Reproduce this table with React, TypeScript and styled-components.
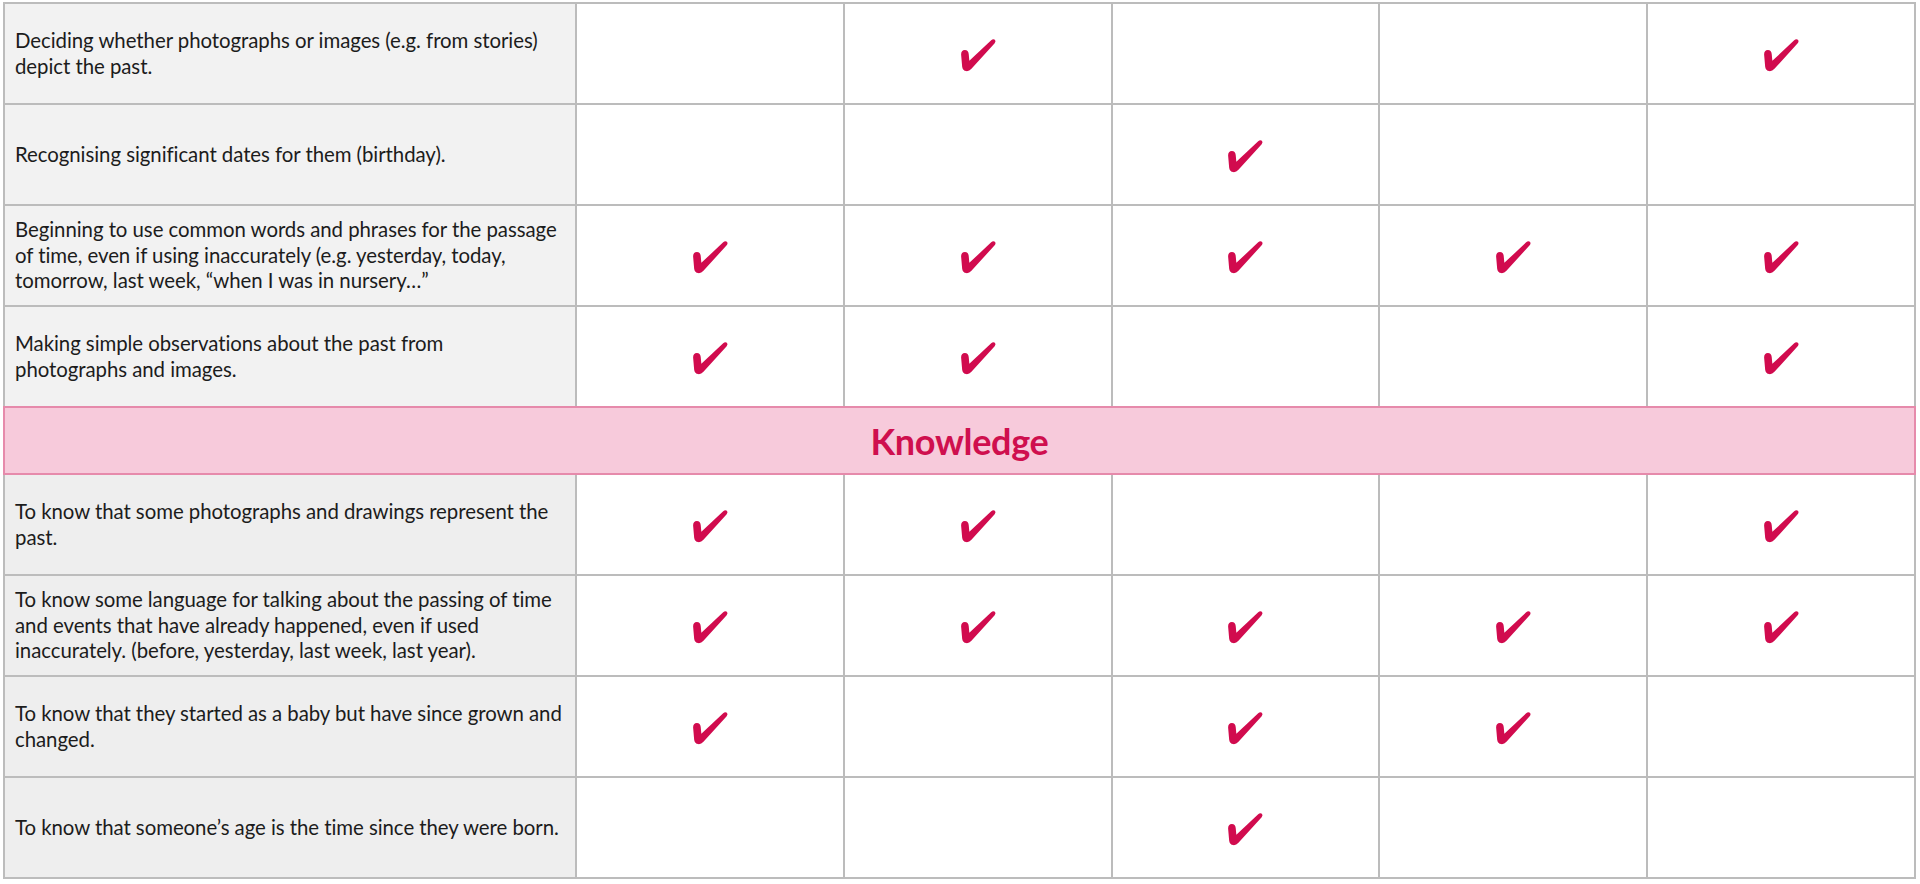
import styled, { createGlobalStyle } from 'styled-components';

const GlobalStyle = createGlobalStyle`
    body {
        margin: 0;
        background: #ffffff;
        font-family: Lato, 'Open Sans', sans-serif;
    }
`;

const Page = styled.div`
    padding: 2px 6px 3px 3px;
`;

const Grid = styled.div`
    display: grid;
    width: 1911px;
    grid-template-columns: 572px repeat(5, 1fr);
    grid-auto-rows: 101px;
    border-top: 2px solid #bcbcbc;
    border-left: 2px solid #bcbcbc;
`;

const LabelCell = styled.div<{ $tone: string }>`
    display: flex;
    align-items: center;
    padding: 0 6px 0 10px;
    background: ${(p) => p.$tone};
    border-right: 2px solid #bcbcbc;
    border-bottom: 2px solid #bcbcbc;
    color: #1c1c1c;
    font-size: 20.4px;
    letter-spacing: -0.05px;
    line-height: 25.5px;
    white-space: pre-line;
`;

const CheckCell = styled.div`
    display: flex;
    align-items: center;
    justify-content: center;
    background: #ffffff;
    border-right: 2px solid #bcbcbc;
    border-bottom: 2px solid #bcbcbc;
`;

const SectionCell = styled.div`
    grid-column: 1 / -1;
    margin: -2px 0 0 -2px;
    display: flex;
    align-items: center;
    justify-content: center;
    background: #f7cadb;
    border: 2px solid #e68aab;
    color: #cf0f4e;
    font-size: 36px;
    font-weight: 700;
    letter-spacing: -0.3px;
`;

const Tick = () => (
    <svg width="38" height="36" viewBox="0 0 36 34">
        <path
            d="M2 17.5 Q2 13.2 5.6 13.2 Q8.8 13.2 9.2 17 L9.8 23.5 L30.5 4 Q32.5 2.3 34 3.6 Q35.3 5 33.8 6.8 L11.8 31 Q9.6 33.5 6.8 33.2 Q3.5 32.8 3 29 Z"
            fill="#d10b4e"
        />
    </svg>
);

type Row = { text: string; checks: number[] };

const skills: Row[] = [
    {
        text: 'Deciding whether photographs or images (e.g. from stories) depict the past.',
        checks: [0, 1, 0, 0, 1],
    },
    { text: 'Recognising significant dates for them (birthday).', checks: [0, 0, 1, 0, 0] },
    {
        text: 'Beginning to use common words and phrases for the passage of time, even if using inaccurately (e.g. yesterday, today, tomorrow, last week, \u201cwhen I was in nursery\u2026\u201d',
        checks: [1, 1, 1, 1, 1],
    },
    {
        text: 'Making simple observations about the past from\nphotographs and images.',
        checks: [1, 1, 0, 0, 1],
    },
];

const knowledge: Row[] = [
    {
        text: 'To know that some photographs and drawings represent the past.',
        checks: [1, 1, 0, 0, 1],
    },
    {
        text: 'To know some language for talking about the passing of time and events that have already happened, even if used inaccurately. (before, yesterday, last week, last year).',
        checks: [1, 1, 1, 1, 1],
    },
    {
        text: 'To know that they started as a baby but have since grown and changed.',
        checks: [1, 0, 1, 1, 0],
    },
    {
        text: 'To know that someone\u2019s age is the time since they were born.',
        checks: [0, 0, 1, 0, 0],
    },
];

function renderRows(rows: Row[], tone: string, prefix: string) {
    return rows.map((row, i) => [
        <LabelCell key={`${prefix}-l-${i}`} $tone={tone}>
            {row.text}
        </LabelCell>,
        ...row.checks.map((c, j) => (
            <CheckCell key={`${prefix}-${i}-${j}`}>{c ? <Tick /> : null}</CheckCell>
        )),
    ]);
}

export default function App() {
    return (
        <Page>
            <GlobalStyle />
            <Grid style={{ gridTemplateRows: 'repeat(4, 101px) 67px repeat(4, 101px)' }}>
                {renderRows(skills, '#f2f2f2', 's')}
                <SectionCell>Knowledge</SectionCell>
                {renderRows(knowledge, '#eeeeee', 'k')}
            </Grid>
        </Page>
    );
}
